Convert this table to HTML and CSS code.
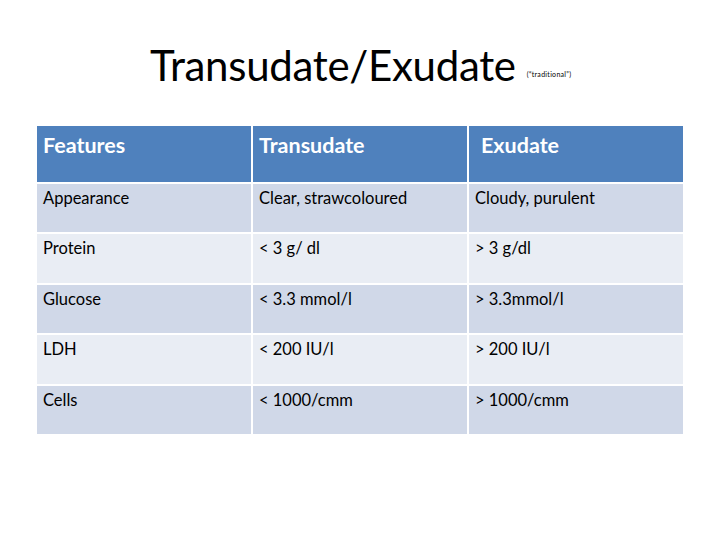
FILE: index.html
```html
<!DOCTYPE html>
<html>
<head>
<meta charset="utf-8">
<link rel="stylesheet" href="styles.css">
</head>
<body>
<div class="slide">
  <div class="title-row">
    <h1 class="title">Transudate/Exudate</h1>
    <span class="note">(“traditional”)</span>
  </div>
  <div class="table">
    <div class="cell head">Features</div>
    <div class="cell head">Transudate</div>
    <div class="cell head ex">Exudate</div>

    <div class="cell dark">Appearance</div>
    <div class="cell dark">Clear, strawcoloured</div>
    <div class="cell dark">Cloudy, purulent</div>

    <div class="cell light">Protein</div>
    <div class="cell light">&lt; 3 g/ dl</div>
    <div class="cell light">&gt; 3 g/dl</div>

    <div class="cell dark">Glucose</div>
    <div class="cell dark">&lt; 3.3 mmol/l</div>
    <div class="cell dark">&gt; 3.3mmol/l</div>

    <div class="cell light">LDH</div>
    <div class="cell light">&lt; 200 IU/l</div>
    <div class="cell light">&gt; 200 IU/l</div>

    <div class="cell dark">Cells</div>
    <div class="cell dark">&lt; 1000/cmm</div>
    <div class="cell dark">&gt; 1000/cmm</div>
  </div>
</div>
</body>
</html>
```
FILE: styles.css
```css
html, body {
  margin: 0;
  padding: 0;
  background: #ffffff;
}
.slide {
  width: 720px;
  height: 540px;
  font-family: "Lato", "Open Sans", sans-serif;
  color: #000;
  box-sizing: border-box;
  padding-top: 40px;
}
.title-row {
  display: flex;
  align-items: baseline;
  padding-left: 150px;
  height: 86px;
}
.title {
  margin: 0;
  font-weight: 400;
  font-size: 42px;
  line-height: 50px;
  letter-spacing: -0.3px;
}
.note {
  font-size: 7px;
  margin-left: 11px;
  position: relative;
  top: -4px;
  color: #000;
  letter-spacing: 0.3px;
}
.table {
  margin-left: 37px;
  width: 646px;
  display: grid;
  grid-template-columns: 214px 214px 214px;
  grid-template-rows: 56px repeat(5, 48.4px);
  column-gap: 2px;
  row-gap: 2px;
}
.cell {
  box-sizing: border-box;
  padding: 4px 6px 0 6px;
  font-size: 16.5px;
  line-height: 20px;
}
.head {
  background: #4f81bd;
  color: #ffffff;
  font-weight: 700;
  font-size: 21.5px;
  line-height: 26px;
  padding-top: 6px;
}
.head.ex {
  padding-left: 12px;
}
.dark {
  background: #d0d8e8;
}
.light {
  background: #e9edf4;
}
```
